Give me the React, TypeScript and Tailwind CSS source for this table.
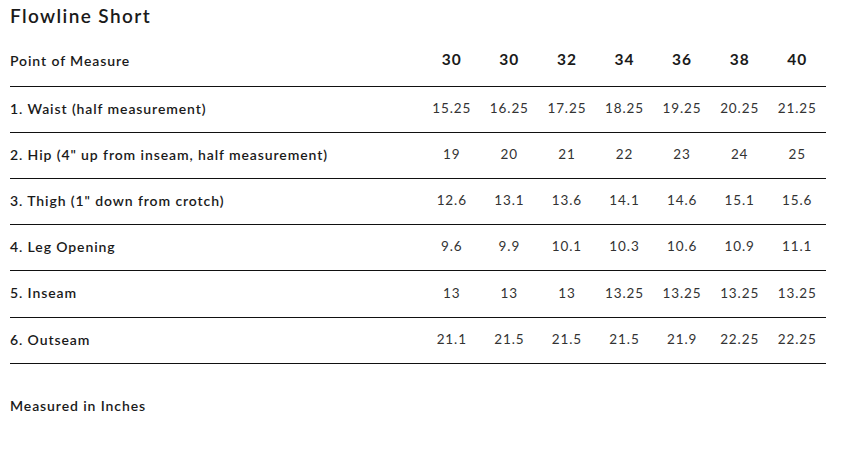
import React from 'react';

const sizes = ['30', '30', '32', '34', '36', '38', '40'];

const rows: { label: string; values: string[] }[] = [
  { label: '1. Waist (half measurement)', values: ['15.25', '16.25', '17.25', '18.25', '19.25', '20.25', '21.25'] },
  { label: '2. Hip (4" up from inseam, half measurement)', values: ['19', '20', '21', '22', '23', '24', '25'] },
  { label: '3. Thigh (1" down from crotch)', values: ['12.6', '13.1', '13.6', '14.1', '14.6', '15.1', '15.6'] },
  { label: '4. Leg Opening', values: ['9.6', '9.9', '10.1', '10.3', '10.6', '10.9', '11.1'] },
  { label: '5. Inseam', values: ['13', '13', '13', '13.25', '13.25', '13.25', '13.25'] },
  { label: '6. Outseam', values: ['21.1', '21.5', '21.5', '21.5', '21.9', '22.25', '22.25'] },
];

export default function App() {
  return (
    <div className="min-h-[451px] w-[849px] bg-white pl-[10px] text-[#1a1a1a]" style={{ fontFamily: 'Lato, "Noto Sans", sans-serif' }}>
      <h1 className="h-[36px] pt-[3px] text-[19px] font-semibold leading-[26px] tracking-[1.4px]">Flowline Short</h1>

      <div className="w-[816px]">
        <div className="grid h-[51px] grid-cols-[413px_repeat(7,1fr)] items-center border-b border-[#111] pb-[2px]">
          <div className="text-[14px] font-semibold tracking-[0.9px]">Point of Measure</div>
          {sizes.map((s, i) => (
            <div key={i} className="text-center text-[15.5px] font-bold tracking-[1px]">
              {s}
            </div>
          ))}
        </div>

        {rows.map((row, r) => (
          <div
            key={row.label}
            className={`grid grid-cols-[413px_repeat(7,1fr)] items-center border-b border-[#111] pb-[2px] ${r >= 4 ? 'h-[46.5px]' : 'h-[46px]'}`}
          >
            <div className="text-[14px] font-semibold tracking-[0.9px]">{row.label}</div>
            {row.values.map((v, i) => (
              <div key={i} className="text-center text-[13.5px] tracking-[0.9px] text-[#333]">
                {v}
              </div>
            ))}
          </div>
        ))}
      </div>

      <p className="mt-[31px] text-[14px] font-semibold tracking-[0.9px]">Measured in Inches</p>
    </div>
  );
}
